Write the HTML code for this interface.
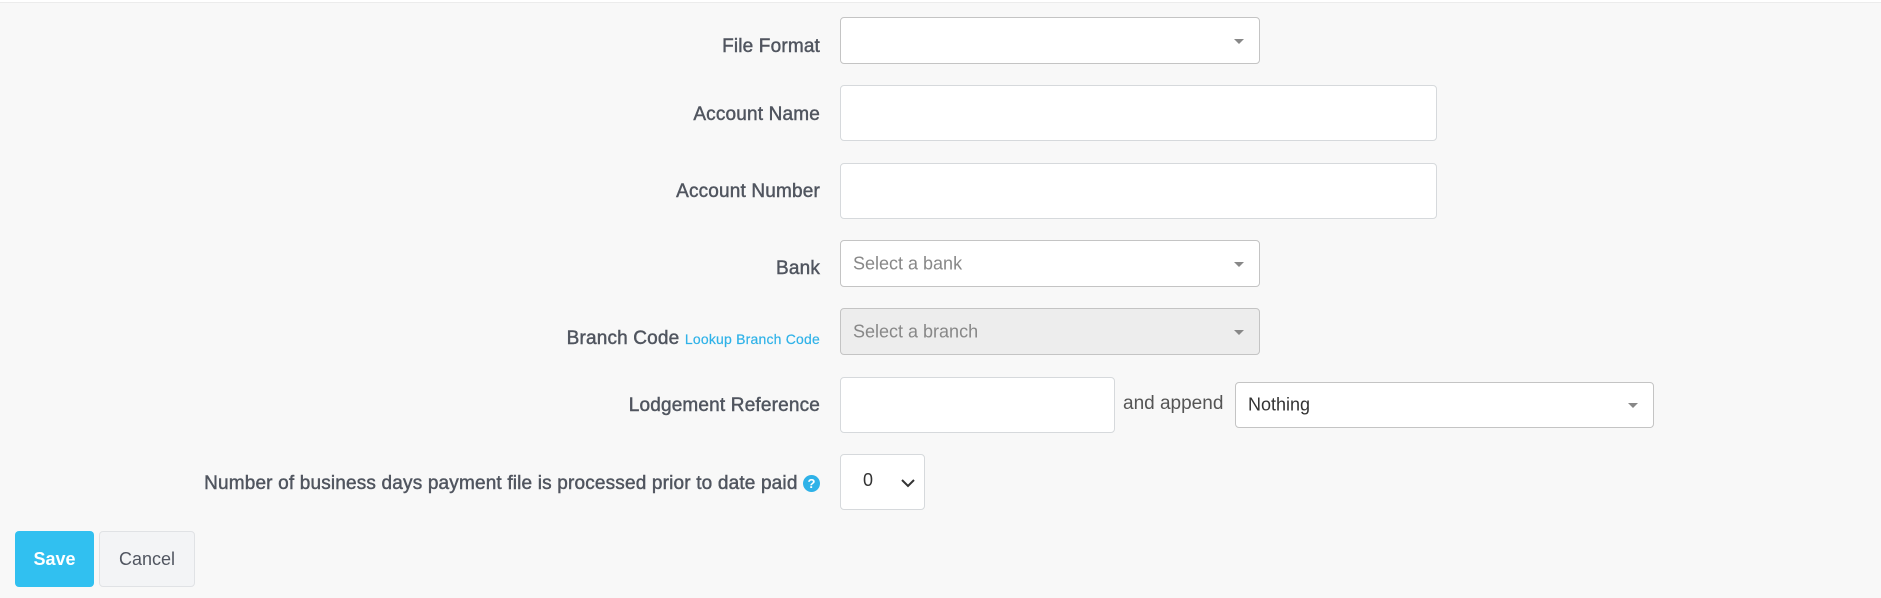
<!DOCTYPE html>
<html><head><meta charset="utf-8"><style>
*{box-sizing:border-box;margin:0;padding:0}
body{width:1881px;height:598px;background:#fff;font-family:"Liberation Sans",sans-serif;position:relative;overflow:hidden}
.bg{position:absolute;left:0;top:2px;width:1881px;height:596px;background:#f8f8f8;border-top:1px solid #ececec}
.lbl{position:absolute;right:1061px;font-size:19px;color:#50555f;font-weight:normal;-webkit-text-stroke:0.45px #50555f;white-space:nowrap;transform:translateY(-50%);letter-spacing:0.17px;margin-top:1px}
.lbl a{color:#2fb2e8;-webkit-text-stroke:0.2px #2fb2e8;font-size:14px;letter-spacing:0.2px;text-decoration:none}
.box{position:absolute;background:#fff;border:1px solid #d6d9dc;border-radius:4px}
.sel{border-color:#c4c4c4}
.arrow{position:absolute;right:15px;top:50%;margin-top:-2px;width:0;height:0;border-left:5px solid transparent;border-right:5px solid transparent;border-top:5px solid #888}
.ph{position:absolute;left:12px;top:50%;transform:translateY(-50%);font-size:18px;color:#888}
.btn{position:absolute;border-radius:4px;font-size:18px;font-weight:bold;display:flex;align-items:center;justify-content:center}
</style></head><body>
<div class="bg"></div>

<div class="lbl" style="top:46px">File Format</div>
<div class="box sel" style="left:840px;top:17px;width:420px;height:47px"><div class="arrow"></div></div>

<div class="lbl" style="top:114px">Account Name</div>
<div class="box" style="left:840px;top:85px;width:597px;height:56px"></div>

<div class="lbl" style="top:191px">Account Number</div>
<div class="box" style="left:840px;top:163px;width:597px;height:56px"></div>

<div class="lbl" style="top:268px">Bank</div>
<div class="box sel" style="left:840px;top:240px;width:420px;height:47px"><div class="ph">Select a bank</div><div class="arrow"></div></div>

<div class="lbl" style="top:338px">Branch Code <a>Lookup Branch Code</a></div>
<div class="box sel" style="left:840px;top:308px;width:420px;height:47px;background:#ededed"><div class="ph">Select a branch</div><div class="arrow"></div></div>

<div class="lbl" style="top:405px">Lodgement Reference</div>
<div class="box" style="left:840px;top:377px;width:275px;height:56px"></div>
<div style="position:absolute;left:1123px;top:393px;font-size:19px;color:#555">and append</div>
<div class="box sel" style="left:1235px;top:382px;width:419px;height:46px"><div class="ph" style="color:#333">Nothing</div><div class="arrow"></div></div>

<div class="lbl" style="top:483px">Number of business days payment file is processed prior to date paid <span style="display:inline-block;width:17px;height:17px;border-radius:50%;background:#2fb2e8;color:#fff;font-size:13px;font-weight:bold;text-align:center;line-height:17px;vertical-align:1px;-webkit-text-stroke:0;letter-spacing:0">?</span></div>
<div class="box" style="left:840px;top:454px;width:85px;height:56px"><div style="position:absolute;left:22px;top:15px;font-size:18px;color:#333">0</div>
<svg style="position:absolute;left:60px;top:24px" width="14" height="9" viewBox="0 0 14 9"><path d="M1 1l6 6 6-6" fill="none" stroke="#333" stroke-width="2"/></svg></div>

<div class="btn" style="left:15px;top:531px;width:79px;height:56px;background:#31c0f0;color:#fff">Save</div>
<div class="btn" style="left:99px;top:531px;width:96px;height:56px;background:#f3f4f6;border:1px solid #e0e2e5;color:#505560;font-weight:normal">Cancel</div>
</body></html>
